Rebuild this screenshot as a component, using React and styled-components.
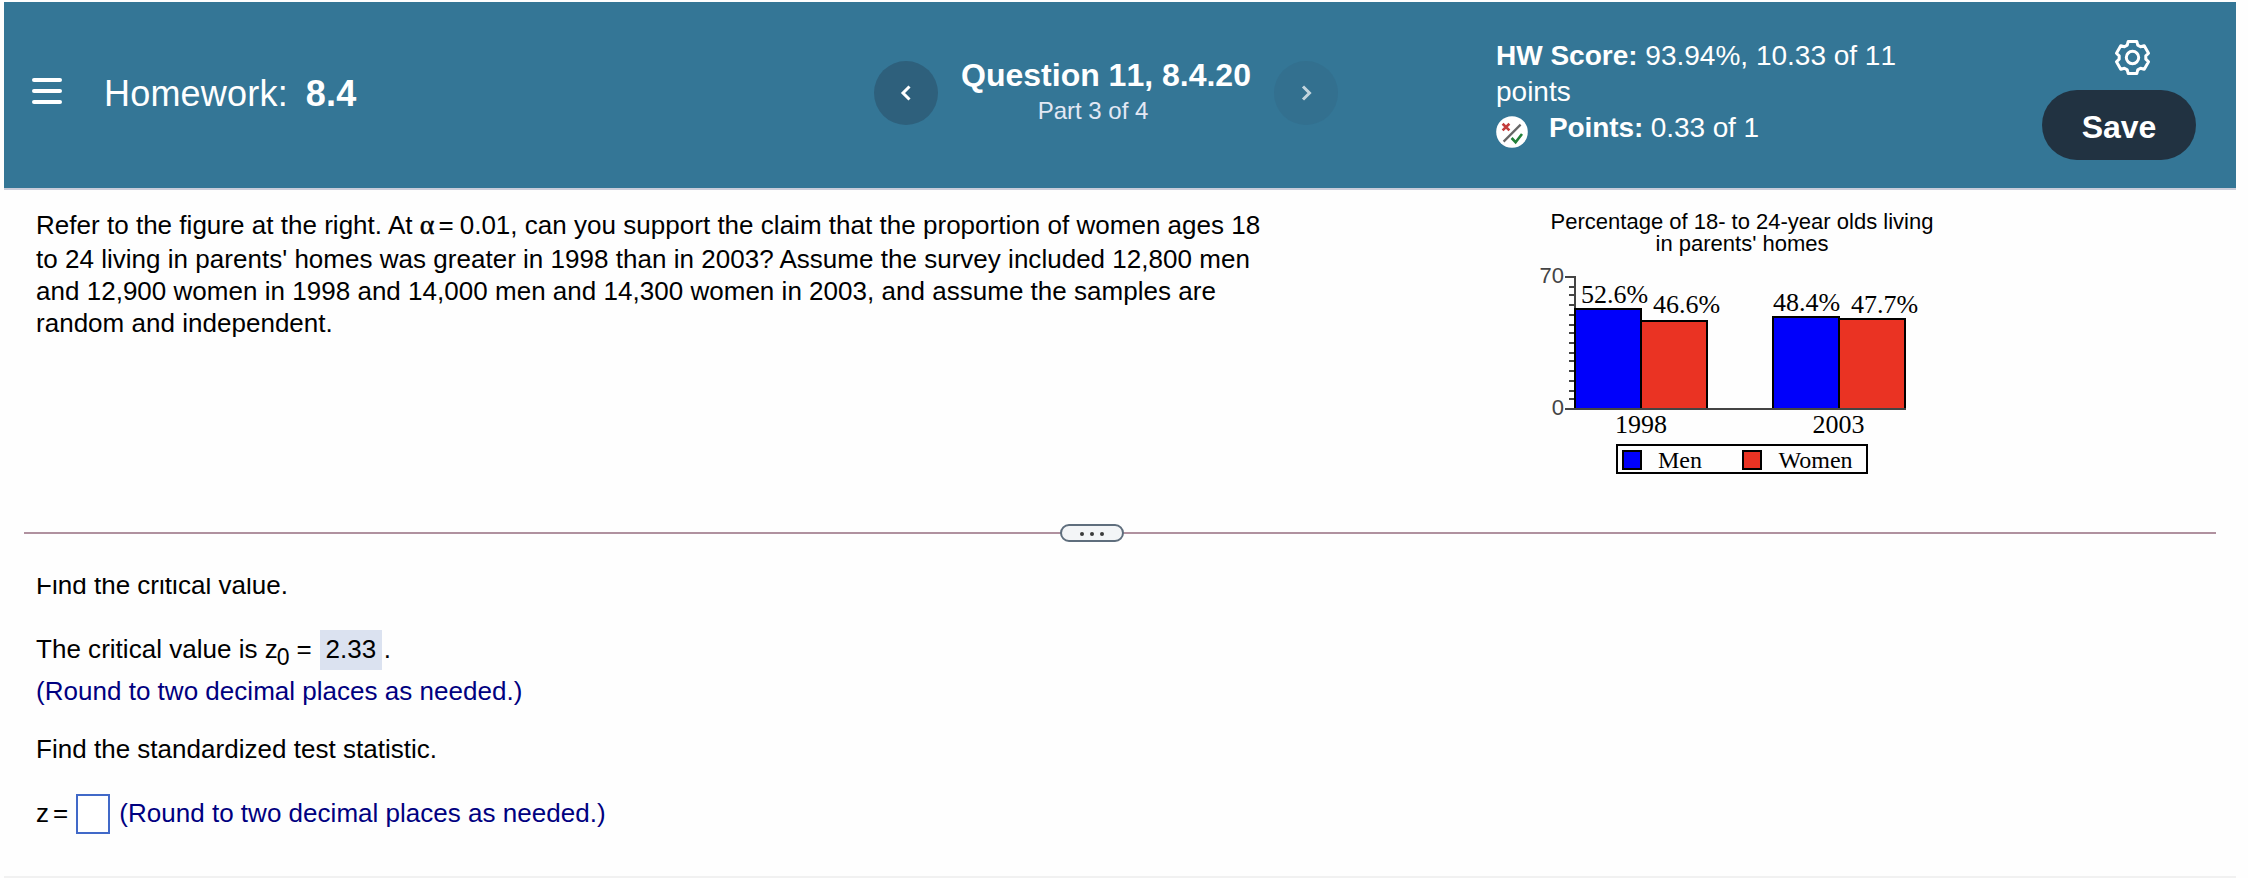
import React from "react";
import styled, { createGlobalStyle } from "styled-components";

const chartBars = [
  { x: 44, top: 49, color: "#0000fb", label: "52.6%", labelX: 51, labelY: 44 },
  { x: 110, top: 61, color: "#ea3323", label: "46.6%", labelX: 123, labelY: 54 },
  { x: 242, top: 57, color: "#0000fb", label: "48.4%", labelX: 243, labelY: 52 },
  { x: 308, top: 59, color: "#ea3323", label: "47.7%", labelX: 321, labelY: 54 },
];

const minorTicks = [28, 36, 46, 56, 66, 74, 84, 94, 102, 112, 122, 132, 140];

const polar = (radius, deg) => {
  const a = (deg * Math.PI) / 180;
  return `${(18.5 + radius * Math.cos(a)).toFixed(2)},${(18.5 + radius * Math.sin(a)).toFixed(2)}`;
};

const gearPoints = [0, 1, 2, 3, 4, 5]
  .map((i) => {
    const mid = i * 60 - 90;
    return [
      polar(13.4, mid - 23),
      polar(16.6, mid - 15),
      polar(16.6, mid + 15),
      polar(13.4, mid + 23),
    ].join(" ");
  })
  .join(" ");

const GearIcon = () => (
  <svg width="37" height="37" viewBox="0 0 37 37" fill="none" stroke="#fff" strokeWidth="3">
    <polygon points={gearPoints} strokeLinejoin="round" />
    <circle cx="18.5" cy="18.5" r="6.2" />
  </svg>
);

const PartialIcon = () => (
  <svg width="32" height="32" viewBox="0 0 32 32" fill="none">
    <circle cx="16" cy="16" r="15.8" fill="#fff" />
    <path d="M6.6 7.8l6.8 6.6M13.4 7.8l-6.8 6.6" stroke="#c43c3c" strokeWidth="2.6" />
    <path d="M24.6 8.6L7.6 25.6" stroke="#666" strokeWidth="2.2" />
    <path d="M15.6 22l4 4.2L26 18" stroke="#22803a" strokeWidth="2.6" />
  </svg>
);

const Chevron = ({ next }) => (
  <svg width="12" height="18" viewBox="0 0 12 18" fill="none" stroke="#fff" strokeWidth="3">
    <path d={next ? "M3 2.5L9.5 9L3 15.5" : "M9.5 2.5L3 9L9.5 15.5"} />
  </svg>
);

const Chart = () => (
  <ChartSvg width="400" height="220" viewBox="0 0 400 220">
    <g stroke="#444" strokeWidth="2" fill="none">
      <path d="M35 18H45V150M35 150H45" />
      {minorTicks.map((y) => (
        <path key={y} d={`M39 ${y}H45`} />
      ))}
    </g>
    {chartBars.map((bar) => (
      <g key={bar.label}>
        <rect
          x={bar.x + 1}
          y={bar.top + 1}
          width="66"
          height={149 - bar.top}
          fill={bar.color}
          stroke="#000"
          strokeWidth="2"
        />
        <SerifText x={bar.labelX} y={bar.labelY}>
          {bar.label}
        </SerifText>
      </g>
    ))}
    <path d="M44 150H376" stroke="#444" strokeWidth="2" />
    <AxisText x="34" y="24">70</AxisText>
    <AxisText x="34" y="156">0</AxisText>
    <SerifText x="85" y="174">1998</SerifText>
    <SerifText x="282.5" y="174">2003</SerifText>
    <rect x="87" y="186" width="250" height="28" fill="none" stroke="#000" strokeWidth="2" />
    <rect x="93" y="192" width="18" height="18" fill="#0000fb" stroke="#000" strokeWidth="2" />
    <rect x="213" y="192" width="18" height="18" fill="#ea3323" stroke="#000" strokeWidth="2" />
    <SerifText $small x="128" y="209">Men</SerifText>
    <SerifText $small x="248.5" y="209">Women</SerifText>
  </ChartSvg>
);

export default function App() {
  return (
    <>
      <GlobalStyle />
      <Page>
        <Header>
          <HomeworkTitle>
            <MenuButton aria-label="Menu">
              <i />
              <i />
              <i />
            </MenuButton>
            <span>Homework:</span>
            <b>8.4</b>
          </HomeworkTitle>
          <QuestionNav>
            <RoundButton aria-label="Previous">
              <Chevron />
            </RoundButton>
            <QuestionInfo>
              <QuestionName>Question 11, 8.4.20</QuestionName>
              <QuestionPart>Part 3 of 4</QuestionPart>
            </QuestionInfo>
            <RoundButton $disabled aria-label="Next">
              <Chevron next />
            </RoundButton>
          </QuestionNav>
          <Score>
            <div>
              <b>HW Score:</b> 93.94%, 10.33 of 11
            </div>
            <div>points</div>
            <PointsRow>
              <PartialIcon />
              <span>
                <b>Points:</b> 0.33 of 1
              </span>
            </PointsRow>
          </Score>
          <Actions>
            <GearIcon />
            <SaveButton>Save</SaveButton>
          </Actions>
        </Header>

        <Question>
          <QuestionText>
            <TextLine $first>
              Refer to the figure at the right. At <Alpha>α</Alpha>
              <Equals>=</Equals>0.01, can you support the claim that the proportion of women ages 18
            </TextLine>
            <TextLine>
              to 24 living in parents' homes was greater in 1998 than in 2003? Assume the survey included 12,800 men
            </TextLine>
            <TextLine>
              and 12,900 women in 1998 and 14,000 men and 14,300 women in 2003, and assume the samples are
            </TextLine>
            <TextLine>random and independent.</TextLine>
          </QuestionText>
          <Figure>
            <Caption>
              Percentage of 18- to 24-year olds living
              <br />
              in parents' homes
            </Caption>
            <Chart />
          </Figure>
        </Question>

        <Divider>
          <Handle>
            <i />
            <i />
            <i />
          </Handle>
        </Divider>

        <Answers>
          <ClippedLine>Find the critical value.</ClippedLine>
          <AnswerRow>
            The critical value is z<Sub>0</Sub>
            <EqualsWide>=</EqualsWide>
            <Given>2.33</Given>
            <span>.</span>
          </AnswerRow>
          <Hint>(Round to two decimal places as needed.)</Hint>
          <Prompt>Find the standardized test statistic.</Prompt>
          <AnswerRow>
            z<Equals>=</Equals>
            <AnswerInput aria-label="z" />
            <HintInline>(Round to two decimal places as needed.)</HintInline>
          </AnswerRow>
        </Answers>
      </Page>
    </>
  );
}

const GlobalStyle = createGlobalStyle`
  body {
    margin: 0;
    background: #fefefe;
    color: #000;
    font-family: "Liberation Sans", Arial, sans-serif;
  }
  * {
    box-sizing: border-box;
  }
`;

const Page = styled.div`
  width: 2248px;
  height: 878px;
  padding: 2px 12px 0 4px;
  overflow: hidden;
`;

const Header = styled.header`
  display: grid;
  grid-template-columns: 870px 464px 1fr 194px;
  height: 188px;
  background: #347696;
  border-bottom: 2px solid #c9ccd9;
  color: #fff;
`;

const HomeworkTitle = styled.div`
  display: flex;
  padding: 72px 0 0 28px;
  font-size: 36px;
  line-height: 40px;
  letter-spacing: 0.2px;
  white-space: nowrap;
  b {
    margin-left: 18px;
  }
`;

const MenuButton = styled.button`
  display: flex;
  flex-direction: column;
  gap: 7px;
  margin: 4px 42px 0 0;
  padding: 0;
  border: 0;
  background: none;
  i {
    width: 30px;
    height: 4px;
    border-radius: 2px;
    background: #fff;
  }
`;

const QuestionNav = styled.div`
  display: flex;
  justify-content: space-between;
  padding-top: 55px;
`;

const RoundButton = styled.button`
  display: flex;
  align-items: center;
  justify-content: center;
  width: 64px;
  height: 64px;
  margin-top: 4px;
  padding: 0 3px 0 2px;
  border: 0;
  border-radius: 50%;
  background: ${(props) => (props.$disabled ? "#33708f" : "#2e607c")};
  svg {
    opacity: ${(props) => (props.$disabled ? 0.7 : 1)};
  }
`;

const QuestionInfo = styled.div`
  text-align: center;
  white-space: nowrap;
`;

const QuestionName = styled.div`
  font-size: 32px;
  font-weight: bold;
  font-kerning: none;
  line-height: 36px;
`;

const QuestionPart = styled.div`
  margin-top: 4px;
  padding-right: 26px;
  color: #e3e8f4;
  font-size: 24px;
  line-height: 28px;
`;

const Score = styled.div`
  padding: 36px 0 0 158px;
  font-size: 28px;
  font-kerning: none;
  line-height: 36px;
  white-space: nowrap;
`;

const PointsRow = styled.div`
  display: flex;
  gap: 21px;
  letter-spacing: -0.1px;
  svg {
    margin-top: 6px;
  }
`;

const Actions = styled.div`
  display: flex;
  flex-direction: column;
  align-items: flex-start;
  padding-top: 37px;
  > svg {
    margin-left: 72px;
  }
`;

const SaveButton = styled.button`
  width: 154px;
  height: 70px;
  margin-top: 14px;
  padding: 4px 0 0;
  border: 0;
  border-radius: 35px;
  background: #213241;
  color: #fff;
  font: bold 32px "Liberation Sans", Arial, sans-serif;
`;

const Question = styled.section`
  display: flex;
  height: 342px;
  padding: 19px 0 0 32px;
`;

const QuestionText = styled.div`
  width: 1494px;
`;

const TextLine = styled.div`
  height: ${(props) => (props.$first ? "34px" : "32px")};
  font-size: 26px;
  line-height: 32px;
  letter-spacing: 0.02px;
  white-space: nowrap;
`;

const Alpha = styled.span`
  font-family: "Liberation Serif", "Times New Roman", serif;
  font-size: 28px;
  line-height: 1;
  -webkit-text-stroke: 0.4px #000;
`;

const Equals = styled.span`
  margin: 0 6px 0 4px;
`;

const EqualsWide = styled.span`
  margin: 0 8px 0 7px;
`;

const Figure = styled.div`
  width: 400px;
  padding-top: 2px;
`;

const Caption = styled.div`
  width: 424px;
  font-size: 22px;
  line-height: 22px;
  text-align: center;
`;

const ChartSvg = styled.svg`
  display: block;
  margin-top: 4px;
`;

const SerifText = styled.text`
  fill: #000;
  font-family: "Liberation Serif", "Times New Roman", serif;
  font-size: ${(props) => (props.$small ? "24px" : "26px")};
`;

const AxisText = styled.text`
  fill: #444;
  font-size: 22px;
  text-anchor: end;
`;

const Divider = styled.div`
  position: relative;
  height: 2px;
  margin: 0 20px;
  background: #b0919f;
`;

const Handle = styled.div`
  position: absolute;
  top: -8px;
  left: 1036px;
  display: flex;
  align-items: center;
  justify-content: center;
  gap: 6px;
  width: 64px;
  height: 18px;
  padding-top: 2px;
  border: 2px solid #5f6e7d;
  border-radius: 9px;
  background: #f3f5f7;
  i {
    width: 4px;
    height: 4px;
    border-radius: 50%;
    background: #3c3c3c;
  }
`;

const Answers = styled.section`
  height: 300px;
  margin-top: 44px;
  padding-left: 32px;
  overflow: hidden;
  border-bottom: 2px solid #f1f1f1;
  font-size: 26px;
  line-height: 32px;
  letter-spacing: 0.02px;
  white-space: nowrap;
`;

/* scrolled partly under the top edge of the panel */
const ClippedLine = styled.div`
  margin: -9px 0 29px;
`;

const AnswerRow = styled.div`
  display: flex;
  height: 40px;
  line-height: 38px;
`;

const Sub = styled.span`
  margin: 8px 0 0 -1px;
  font-size: 23px;
`;

const Given = styled.span`
  width: 62px;
  height: 40px;
  margin-right: 2px;
  background: #dbe2f0;
  text-align: center;
`;

const Hint = styled.div`
  margin-top: 5px;
  color: #000080;
`;

const Prompt = styled.div`
  margin: 26px 0 29px;
`;

const AnswerInput = styled.input`
  width: 34px;
  height: 40px;
  margin: 0 9px 0 2px;
  padding: 0;
  border: 2px solid #4169c8;
  border-radius: 0;
  background: #fff;
`;

const HintInline = styled.span`
  color: #000080;
`;
